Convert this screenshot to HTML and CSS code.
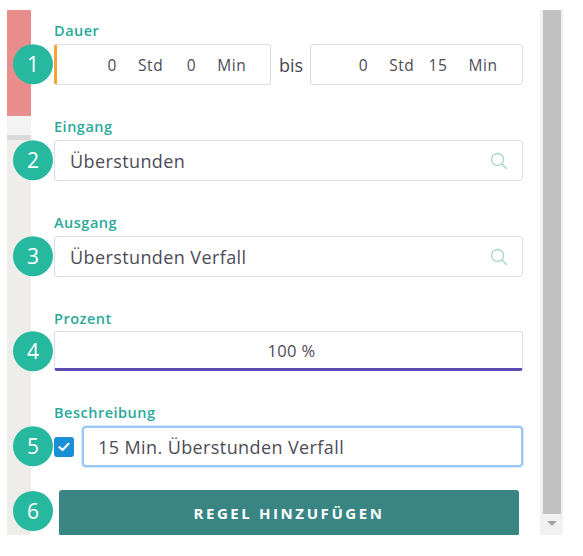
FILE: index.html
```html
<!DOCTYPE html>
<html lang="de">
<head>
  <meta charset="UTF-8">
  <meta name="viewport" content="width=device-width, initial-scale=1.0">
  <title>Regel hinzufügen</title>
  <link rel="stylesheet" href="styles.css">
</head>
<body>
  <div class="frame">
    <div class="strip">
      <div class="strip-red"></div>
      <div class="strip-light"></div>
      <div class="strip-line"></div>
    </div>

    <div class="content">
      <div class="field">
        <label class="label">Dauer</label>
        <div class="row">
          <span class="badge">1</span>
          <div class="input time active">
            <span class="num">0</span><span class="unit">Std</span>
            <span class="num">0</span><span class="unit">Min</span>
          </div>
          <span class="bis">bis</span>
          <div class="input time grow">
            <span class="num">0</span><span class="unit">Std</span>
            <span class="num">15</span><span class="unit">Min</span>
          </div>
        </div>
      </div>

      <div class="field">
        <label class="label">Eingang</label>
        <div class="row">
          <span class="badge">2</span>
          <div class="input search grow">
            <span class="value">Überstunden</span>
            <svg class="icon" width="18" height="18" viewBox="0 0 18 18">
              <circle cx="7.5" cy="7.5" r="6" fill="none" stroke="#a6d9d1" stroke-width="1.4"/>
              <line x1="11.8" y1="11.8" x2="16.5" y2="16.5" stroke="#a6d9d1" stroke-width="1.6" stroke-linecap="round"/>
            </svg>
          </div>
        </div>
      </div>

      <div class="field">
        <label class="label">Ausgang</label>
        <div class="row">
          <span class="badge">3</span>
          <div class="input search grow">
            <span class="value">Überstunden Verfall</span>
            <svg class="icon" width="18" height="18" viewBox="0 0 18 18">
              <circle cx="7.5" cy="7.5" r="6" fill="none" stroke="#a6d9d1" stroke-width="1.4"/>
              <line x1="11.8" y1="11.8" x2="16.5" y2="16.5" stroke="#a6d9d1" stroke-width="1.6" stroke-linecap="round"/>
            </svg>
          </div>
        </div>
      </div>

      <div class="field">
        <label class="label">Prozent</label>
        <div class="row">
          <span class="badge">4</span>
          <div class="input percent grow">100 %</div>
        </div>
      </div>

      <div class="field">
        <label class="label">Beschreibung</label>
        <div class="row">
          <span class="badge">5</span>
          <span class="checkbox">
            <svg width="12" height="10" viewBox="0 0 12 10">
              <path d="M1.5 5.2 L4.6 8 L10.5 1.8" fill="none" stroke="#fff" stroke-width="2.2" stroke-linecap="round" stroke-linejoin="round"/>
            </svg>
          </span>
          <div class="input focus grow">
            <span class="value">15 Min. Überstunden Verfall</span>
          </div>
        </div>
      </div>

      <div class="field last">
        <div class="row">
          <span class="badge">6</span>
          <button class="submit">REGEL HINZUFÜGEN</button>
        </div>
      </div>
    </div>

    <div class="scrollbar">
      <div class="thumb"></div>
      <div class="arrow"></div>
    </div>
  </div>
</body>
</html>
```

FILE: styles.css
```css
body {
  margin: 0;
  background-color: #fff;
  font-family: "Open Sans", Arial, sans-serif;
  color: #4d4b57;
}

.frame {
  display: flex;
  width: 556px;
  height: 525px;
  margin: 10px 0 0 7px;
  overflow: hidden;
}

.strip {
  width: 24px;
  flex-shrink: 0;
  background-color: #eeede9;
}

.strip-red {
  height: 106px;
  background-color: #e88c8c;
}

.strip-light {
  height: 19px;
  background-color: #f3f3f3;
}

.strip-line {
  height: 5px;
  background-color: #d9d9d9;
}

.content {
  flex: 1;
  padding: 12px 17px 0 23px;
}

.field {
  margin-bottom: 33px;
}

.field.last {
  margin-top: -10px;
  padding: 0 4px 0 5px;
}

.label {
  display: block;
  height: 18px;
  margin-bottom: 4px;
  font-size: 14.5px;
  font-weight: 600;
  line-height: 18px;
  letter-spacing: 0.5px;
  color: #2aa99a;
}

.row {
  position: relative;
  display: flex;
  align-items: center;
}

.badge {
  position: absolute;
  left: -41px;
  top: 50%;
  transform: translateY(-52%);
  width: 40px;
  height: 40px;
  border-radius: 50%;
  background-color: #26b9a0;
  color: #fff;
  font-size: 21px;
  line-height: 40px;
  text-align: center;
  letter-spacing: 0;
  z-index: 2;
}

.field.last .badge {
  left: -46px;
  transform: translateY(-55%);
}

.input {
  display: flex;
  align-items: center;
  box-sizing: border-box;
  height: 41px;
  border: 1px solid #dcdee2;
  border-radius: 3px;
  background-color: #fff;
  font-size: 18px;
  letter-spacing: 0.4px;
}

.grow {
  flex: 1;
}

.time {
  width: 217px;
  padding-left: 31px;
  font-size: 15.5px;
  letter-spacing: 0.6px;
}

.time.active {
  padding-left: 34px;
  border-left: 3px solid #f6a234;
}

.time.grow {
  flex: 1;
  width: auto;
}

.num {
  width: 26px;
  text-align: right;
}

.unit {
  margin: 0 7px 0 21px;
}

.bis {
  margin: 0 7px 0 8px;
  font-size: 18px;
  color: #4a4650;
}

.search {
  justify-content: space-between;
  padding: 0 14px 0 15px;
}

.icon {
  display: block;
}

.percent {
  justify-content: center;
  height: 40px;
  margin-top: -1px;
  padding-left: 6px;
  border-bottom: 3px solid #5a4cb4;
  font-size: 16.5px;
}

.checkbox {
  display: flex;
  align-items: center;
  justify-content: center;
  width: 20px;
  height: 20px;
  margin: 1px 8px 0 0;
  border-radius: 3px;
  background-color: #1a8fd6;
}

.focus {
  padding-left: 14px;
  border: 2px solid #9ac8f6;
  box-shadow: 0 0 0 1px #d6e9fc;
  border-radius: 4px;
}

.submit {
  width: 100%;
  height: 46px;
  border: none;
  border-radius: 3px;
  background-color: #388584;
  color: #fff;
  font-family: "Open Sans", Arial, sans-serif;
  font-size: 15px;
  font-weight: 700;
  letter-spacing: 2.6px;
  cursor: pointer;
}

.scrollbar {
  position: relative;
  width: 23px;
  flex-shrink: 0;
  background-color: #f1f1f1;
}

.thumb {
  height: 504px;
  margin: 0 2px 0 3px;
  background-color: #c1c1c1;
}

.arrow {
  width: 0;
  height: 0;
  margin: 7px auto 0;
  border-left: 5px solid transparent;
  border-right: 5px solid transparent;
  border-top: 5px solid #a3a3a3;
}
```
